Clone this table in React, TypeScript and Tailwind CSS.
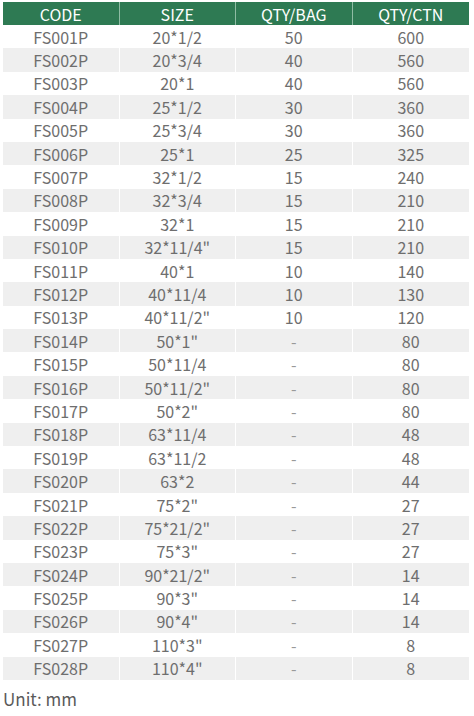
const rows: [string, string, string, string][] = [
  ["FS001P", "20*1/2", "50", "600"],
  ["FS002P", "20*3/4", "40", "560"],
  ["FS003P", "20*1", "40", "560"],
  ["FS004P", "25*1/2", "30", "360"],
  ["FS005P", "25*3/4", "30", "360"],
  ["FS006P", "25*1", "25", "325"],
  ["FS007P", "32*1/2", "15", "240"],
  ["FS008P", "32*3/4", "15", "210"],
  ["FS009P", "32*1", "15", "210"],
  ["FS010P", "32*11/4\"", "15", "210"],
  ["FS011P", "40*1", "10", "140"],
  ["FS012P", "40*11/4", "10", "130"],
  ["FS013P", "40*11/2\"", "10", "120"],
  ["FS014P", "50*1\"", "-", "80"],
  ["FS015P", "50*11/4", "-", "80"],
  ["FS016P", "50*11/2\"", "-", "80"],
  ["FS017P", "50*2\"", "-", "80"],
  ["FS018P", "63*11/4", "-", "48"],
  ["FS019P", "63*11/2", "-", "48"],
  ["FS020P", "63*2", "-", "44"],
  ["FS021P", "75*2\"", "-", "27"],
  ["FS022P", "75*21/2\"", "-", "27"],
  ["FS023P", "75*3\"", "-", "27"],
  ["FS024P", "90*21/2\"", "-", "14"],
  ["FS025P", "90*3\"", "-", "14"],
  ["FS026P", "90*4\"", "-", "14"],
  ["FS027P", "110*3\"", "-", "8"],
  ["FS028P", "110*4\"", "-", "8"],
];

const headers = ["CODE", "SIZE", "QTY/BAG", "QTY/CTN"];

export default function App() {
  return (
    <div className="w-[474px] h-[716px] bg-white pt-[2px] pl-[3px] font-['Noto_Sans_CJK_SC',sans-serif]">
      <div className="w-[466px]">
        <div className="grid grid-cols-4 h-[23px] bg-[#2e7a53] text-white text-[16px]">
          {headers.map((h, i) => (
            <div
              key={h}
              className={`flex items-center justify-center leading-none ${i < 3 ? "border-r border-[#8fbca4]" : ""}`}
            >
              {h}
            </div>
          ))}
        </div>
        {rows.map((r, ri) => (
          <div
            key={r[0]}
            className={`grid grid-cols-4 h-[23.4px] text-[16px] text-[#6e6e6e] ${ri % 2 === 1 ? "bg-[#efefef]" : "bg-white"}`}
          >
            {r.map((c, i) => (
              <div
                key={i}
                className={`flex items-center justify-center leading-none ${i < 3 ? "border-r border-white" : ""} ${c === "-" ? "text-[#999]" : ""}`}
              >
                {c}
              </div>
            ))}
          </div>
        ))}
      </div>
      <div className="mt-[10px] text-[17px] leading-none text-[#5a5a5a]">Unit: mm</div>
    </div>
  );
}
